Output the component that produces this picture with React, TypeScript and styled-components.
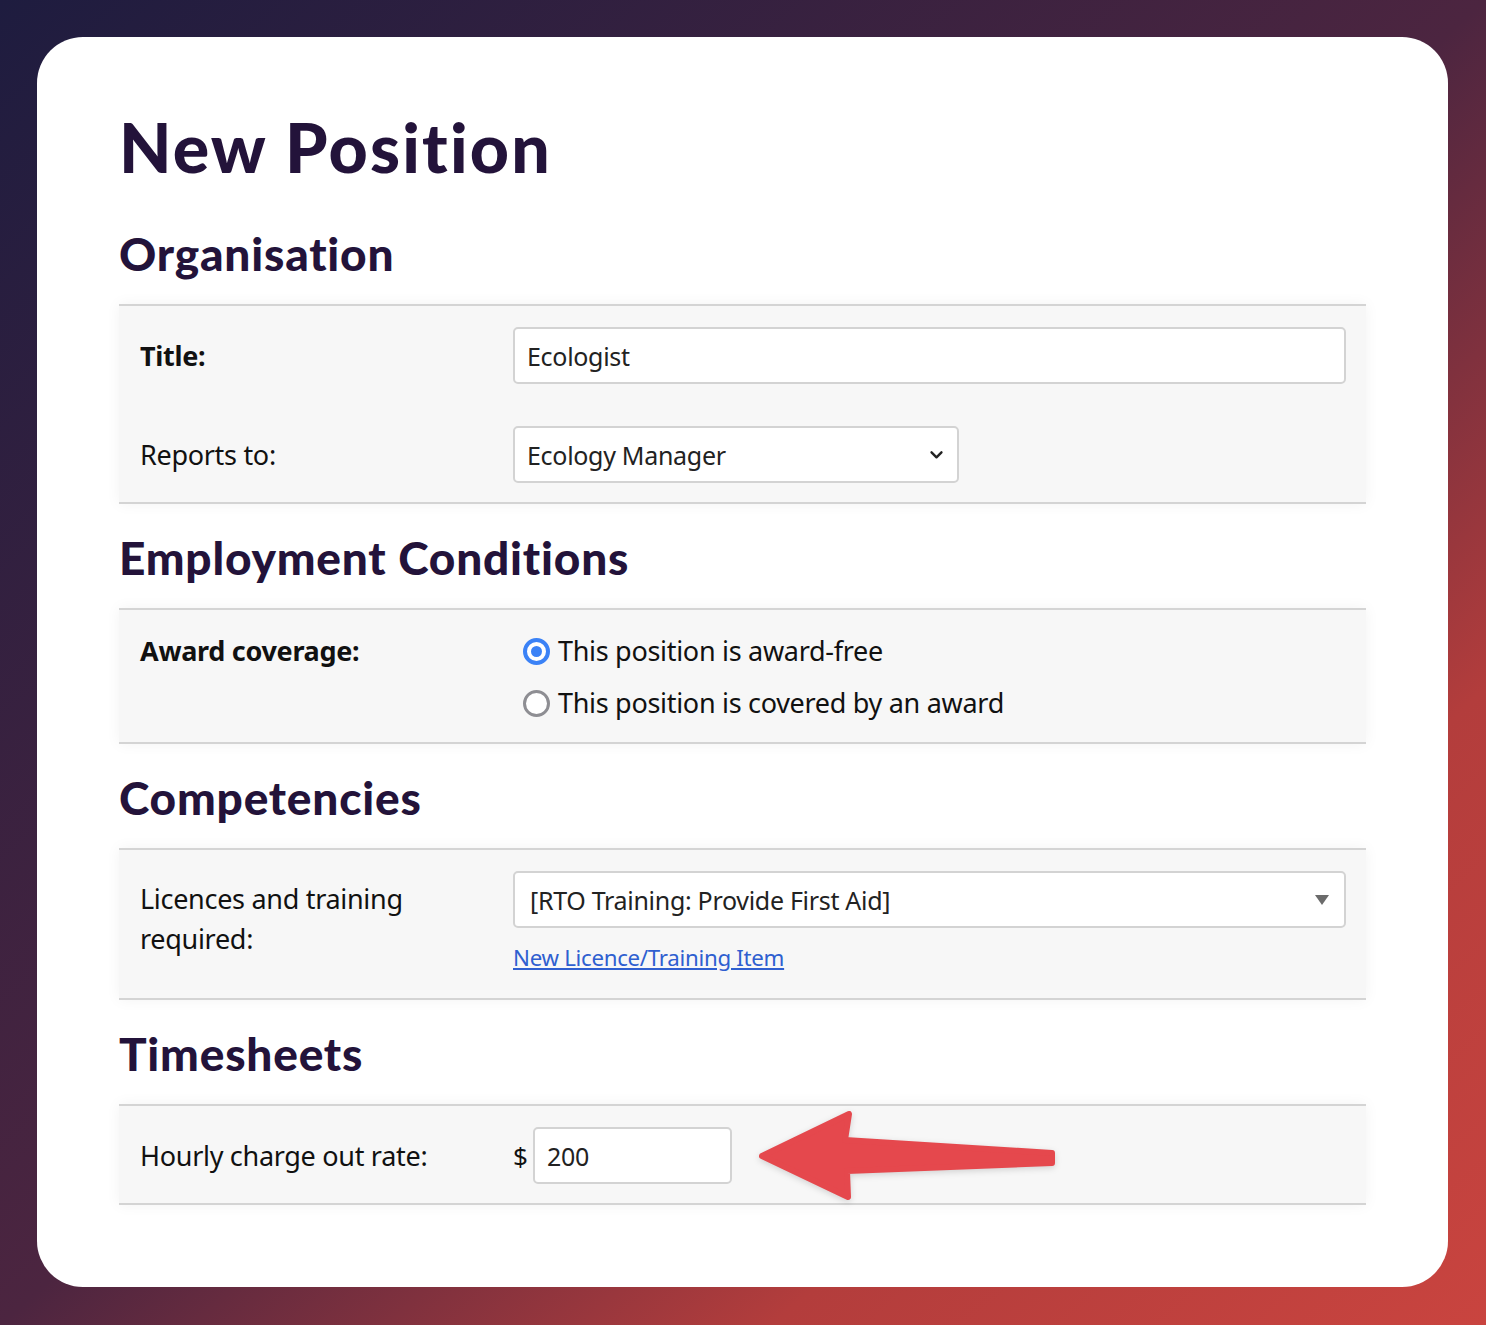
import React, { FunctionComponent } from "react";
import styled, { createGlobalStyle } from "styled-components";

const GlobalStyle = createGlobalStyle`
  html, body {
    margin: 0;
    padding: 0;
  }
  body {
    font-family: "Lato", "Noto Sans", sans-serif;
  }
`;

const Backdrop = styled.div`
  width: 1486px;
  height: 1325px;
  box-sizing: border-box;
  padding: 37px 38px 38px 37px;
  background: linear-gradient(to bottom right, #1e1c3f 0%, #4c2540 50%, #b33d3c 76%, #c9443f 100%);
`;

const Card = styled.div`
  height: 100%;
  box-sizing: border-box;
  background: #fff;
  border-radius: 46px;
  padding: 76px 82px 0 82px;
`;

const PageTitle = styled.h1`
  margin: 0 0 50px;
  font-family: "Lato", sans-serif;
  font-weight: 900;
  font-size: 68px;
  line-height: 1;
  letter-spacing: 2.2px;
  color: #23133a;
`;

const SectionTitle = styled.h2`
  margin: 0 0 27px;
  font-family: "Lato", sans-serif;
  font-weight: 900;
  font-size: 46px;
  line-height: 1;
  letter-spacing: 0.8px;
  color: #23133a;
`;

const Panel = styled.div<{ $bottom?: number }>`
  background: #f7f7f7;
  border-top: 2px solid #d4d4d4;
  border-bottom: 2px solid #d4d4d4;
  box-shadow: 0 0 14px rgba(0, 0, 0, 0.05);
  padding: 21px 20px ${(p) => p.$bottom ?? 19}px 21px;
  margin-bottom: 31px;
`;

const Row = styled.div<{ $top?: boolean }>`
  display: grid;
  grid-template-columns: 373px 1fr;
  align-items: ${(p) => (p.$top ? "start" : "center")};
  & + & {
    margin-top: 42px;
  }
`;

const Label = styled.div<{ $bold?: boolean; $offset?: number }>`
  font-family: "Noto Sans", sans-serif;
  font-size: 27px;
  line-height: 40px;
  font-weight: ${(p) => (p.$bold ? 700 : 400)};
  color: #111;
  letter-spacing: -0.3px;
  padding-top: ${(p) => p.$offset ?? 0}px;
`;

const Field = styled.div<{ $width?: string }>`
  box-sizing: border-box;
  width: ${(p) => p.$width || "100%"};
  height: 57px;
  background: #fff;
  border: 2px solid #d3d3d3;
  border-radius: 5px;
  display: flex;
  align-items: center;
  justify-content: space-between;
  padding: 0 12px 0 12px;
  font-family: "Noto Sans", sans-serif;
  font-size: 25px;
  color: #222;
  letter-spacing: -0.3px;
`;

const SelectField = styled(Field)`
  padding-left: 15px;
  padding-right: 14px;
`;

const RadioList = styled.div`
  display: flex;
  flex-direction: column;
  gap: 12px;
  padding-left: 10px;
`;

const RadioOption = styled.label`
  display: flex;
  align-items: center;
  gap: 8px;
  font-family: "Noto Sans", sans-serif;
  font-size: 27px;
  line-height: 40px;
  color: #111;
  letter-spacing: -0.3px;
`;

const RadioDot = styled.span<{ $checked?: boolean }>`
  box-sizing: border-box;
  width: 27px;
  height: 27px;
  border-radius: 50%;
  background: #fff;
  border: ${(p) => (p.$checked ? "4px solid #3b82f6" : "3px solid #8e8e93")};
  display: flex;
  align-items: center;
  justify-content: center;
  &::after {
    content: "";
    display: ${(p) => (p.$checked ? "block" : "none")};
    width: 11px;
    height: 11px;
    border-radius: 50%;
    background: #3b82f6;
  }
`;

const Stack = styled.div`
  display: flex;
  flex-direction: column;
  gap: 14px;
`;

const Link = styled.a`
  font-family: "Noto Sans", sans-serif;
  font-size: 22.3px;
  color: #2f5fd0;
  text-decoration: underline;
  letter-spacing: -0.3px;
  cursor: pointer;
`;

const MoneyRow = styled.div`
  position: relative;
`;

const MoneyWrap = styled.div`
  display: flex;
  align-items: center;
  gap: 5px;
  font-family: "Noto Sans", sans-serif;
  font-size: 26px;
  color: #111;
`;

const ArrowSvg = styled.svg`
  position: absolute;
  left: 246px;
  top: -18px;
  overflow: visible;
  filter: drop-shadow(0 2px 3px rgba(0, 0, 0, 0.15));
`;

const Chevron = () => (
  <svg width="17" height="17" viewBox="0 0 24 24" fill="none" stroke="#222" strokeWidth="3.4" strokeLinecap="round" strokeLinejoin="round">
    <path d="M5 9l7 7 7-7" />
  </svg>
);

const Caret = () => (
  <svg width="16" height="12" viewBox="0 0 16 12">
    <path d="M1 1h14L8 11z" fill="#6b6b6b" />
  </svg>
);

const Arrow = () => (
  <ArrowSvg width="300" height="92" viewBox="0 0 300 92">
    <path
      d="M3 47 L90 5 L86 31 L293 44 L293 54 L88 62 L89 88 Z"
      fill="#e5484d"
      stroke="#e5484d"
      strokeWidth="6"
      strokeLinejoin="round"
    />
  </ArrowSvg>
);

const App: FunctionComponent = () => {
  return (
    <>
      <GlobalStyle />
      <Backdrop>
        <Card>
          <PageTitle>New Position</PageTitle>

          <SectionTitle>Organisation</SectionTitle>
          <Panel>
            <Row>
              <Label $bold>Title:</Label>
              <Field>Ecologist</Field>
            </Row>
            <Row>
              <Label>Reports to:</Label>
              <Field $width="446px">
                Ecology Manager
                <Chevron />
              </Field>
            </Row>
          </Panel>

          <SectionTitle>Employment Conditions</SectionTitle>
          <Panel>
            <Row $top>
              <Label $bold>Award coverage:</Label>
              <RadioList>
                <RadioOption>
                  <RadioDot $checked />
                  This position is award-free
                </RadioOption>
                <RadioOption>
                  <RadioDot />
                  This position is covered by an award
                </RadioOption>
              </RadioList>
            </Row>
          </Panel>

          <SectionTitle>Competencies</SectionTitle>
          <Panel $bottom={25}>
            <Row $top>
              <Label $offset={8}>
                Licences and training
                <br />
                required:
              </Label>
              <Stack>
                <SelectField>
                  [RTO Training: Provide First Aid]
                  <Caret />
                </SelectField>
                <Link>New Licence/Training Item</Link>
              </Stack>
            </Row>
          </Panel>

          <SectionTitle>Timesheets</SectionTitle>
          <Panel>
            <Row>
              <Label>Hourly charge out rate:</Label>
              <MoneyRow>
                <MoneyWrap>
                  $<Field $width="199px">200</Field>
                </MoneyWrap>
                <Arrow />
              </MoneyRow>
            </Row>
          </Panel>
        </Card>
      </Backdrop>
    </>
  );
};

export default App;
